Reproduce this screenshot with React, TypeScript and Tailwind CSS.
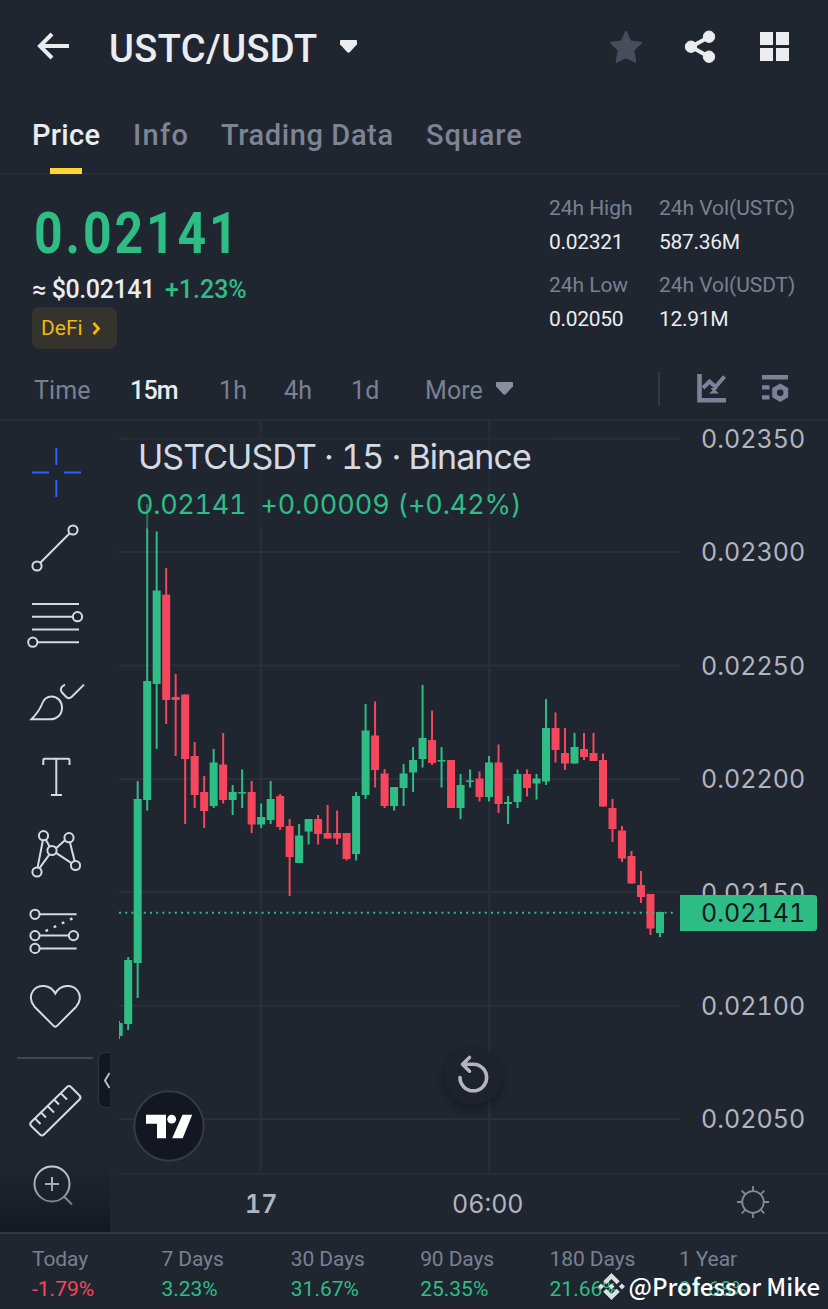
import React from "react";
import { SiBinance } from "react-icons/si";

const tabs = [
  { label: "Price", style: "w-[101px] tracking-[0.3px] text-[#eaecef]" },
  { label: "Info", style: "w-[88px] tracking-[1.3px] text-[#7d8494]" },
  { label: "Trading Data", style: "w-[205px] tracking-[0.6px] text-[#7d8494]" },
  { label: "Square", style: "w-[100px] tracking-[0.9px] text-[#7d8494]" },
];

const stats = [
  { label: "24h High", value: "0.02321" },
  { label: "24h Vol(USTC)", value: "587.36M" },
  { label: "24h Low", value: "0.02050" },
  { label: "24h Vol(USDT)", value: "12.91M" },
];

const periods = [
  { label: "Today", value: "-1.79%" },
  { label: "7 Days", value: "3.23%" },
  { label: "30 Days", value: "31.67%" },
  { label: "90 Days", value: "25.35%" },
  { label: "180 Days", value: "21.66%" },
  { label: "1 Year", value: "91.68%" },
];

const prices = ["0.02350", "0.02300", "0.02250", "0.02200", "0.02150", "0.02100", "0.02050"];

// [up, wick top, body top, body bottom, wick bottom]
const candles = [
  [1, 1021, 1023, 1036, 1039],
  [1, 957, 960, 1024, 1030],
  [1, 781, 799, 963, 998],
  [1, 504, 681, 800, 810.5],
  [1, 531.5, 590.5, 684, 749],
  [0, 568, 594.7, 700, 724],
  [0, 674, 697, 700, 756],
  [0, 694.5, 694.5, 759, 824],
  [0, 742, 756, 795, 808],
  [0, 776, 792, 811, 828],
  [1, 749, 762.5, 806, 808],
  [0, 733, 764.5, 800, 803.5],
  [1, 785, 792, 800, 815],
  [1, 769.5, 792, 793.5, 808],
  [0, 781, 792, 824.5, 833],
  [1, 803.5, 817, 824.5, 828],
  [1, 781, 799, 820, 824],
  [0, 794, 796, 827, 830],
  [0, 819, 826, 857, 896],
  [1, 824, 835.5, 863, 863],
  [1, 819, 819, 831.5, 844.5],
  [0, 815, 819, 834, 844.5],
  [0, 805, 833, 838.5, 838.5],
  [0, 810.5, 833, 838.5, 844.5],
  [0, 833, 833, 859, 860.5],
  [1, 792, 796, 854, 860.5],
  [1, 704, 730.5, 795, 799],
  [0, 701.5, 735.5, 770, 787.5],
  [0, 769, 773.5, 806, 808],
  [1, 787, 787, 806, 810.5],
  [1, 764, 773.5, 788, 806],
  [1, 747, 760, 772.5, 792],
  [1, 685, 738, 759, 767.5],
  [0, 710.5, 740, 763, 765],
  [1, 747, 760, 761.5, 787.5],
  [0, 760, 760, 808, 808],
  [1, 774, 785, 808, 819],
  [1, 769.5, 780.5, 782, 787.5],
  [0, 771.5, 778.5, 797, 801.5],
  [1, 756, 762.5, 797, 801.5],
  [0, 744.5, 762.5, 804, 813],
  [1, 796, 802, 804, 824],
  [1, 769.5, 774, 802, 808],
  [0, 769.5, 774, 788, 796.5],
  [1, 774, 778.5, 783.5, 799.5],
  [1, 699, 728, 781.5, 785],
  [0, 712.5, 728, 750, 762.5],
  [0, 728, 753, 763.5, 770],
  [1, 733, 747, 763.5, 763.5],
  [0, 733, 749, 757, 760],
  [0, 733, 753, 761, 761],
  [0, 753.5, 760, 806.5, 806.5],
  [0, 799, 808, 829, 842],
  [0, 826, 830.5, 858.5, 862],
  [0, 851, 856, 883.5, 883.5],
  [0, 871, 885, 897, 903],
  [0, 894, 894, 928.5, 935],
  [1, 912, 912, 933, 937],
];

function Caret({ className }: { className: string }) {
  return (
    <svg width="17" height="13" viewBox="0 0 17 13" fill="currentColor" className={className}>
      <path d="M1 0h15q1 0 1 1v3.3l-7 7.7q-1.5 1.4-3 0L0 4.3V1q0-1 1-1z" />
    </svg>
  );
}

function Tool({ children }: { children: React.ReactNode }) {
  return (
    <div className="flex h-[76.4px] shrink-0 items-center pl-[26px]">
      <svg width="60" height="60" viewBox="0 0 60 60" fill="none" stroke="currentColor" strokeWidth="2">
        {children}
      </svg>
    </div>
  );
}

function Toolbar() {
  return (
    <div className="relative flex h-[811px] w-[110px] shrink-0 flex-col overflow-hidden pt-[12.5px] text-[#d5d9e3]">
      <Tool>
        <path stroke="#2962ff" strokeWidth="2" d="M30.3 6v17M30.3 38v17M6 30.5h17M38 30.5h17" />
      </Tool>
      <Tool>
        <circle cx="11" cy="48" r="4.6" />
        <circle cx="47" cy="12" r="4.6" />
        <path d="M14.3 44.7L43.7 15.3" />
      </Tool>
      <Tool>
        <path d="M6 10h47M6 22.700h41M6 35.500h47M11.500 48.200H53" />
        <circle cx="51.500" cy="22.700" r="4.600" />
        <circle cx="6.800" cy="48.200" r="4.600" />
      </Tool>
      <Tool>
        <path d="M5.500 48.300c6-6.300 8.200-9.500 10.300-14.800 1.700-5 5-8 9.700-8 6.200 0 10.500 5 10.500 11.200 0 6.600-4.800 11.600-12 11.600z" />
        <path d="M39 13.600c-4.400 2-5.300 5.200-2.700 8.200l3.700 4c2 2 3.800 2 5.800 0L58 13.600" />
      </Tool>
      <Tool>
        <path d="M17.300 18v-5q0-1.300 1.300-1.300h23.600q1.300 0 1.300 1.300v5M30.300 11.700V48M25 48h11" />
      </Tool>
      <Tool>
        <path d="M19.800 15.700l3.800 6.900M30 24.200l9-8M16.900 16.300L11.600 43.400M13.500 44.100l10-13.700M30 28.800l15.500 10.400M43.900 18.300l4.700 18.700" />
        <circle cx="17.500" cy="11.700" r="4.600" />
        <circle cx="43" cy="13.700" r="4.600" />
        <circle cx="26" cy="26.500" r="4.600" />
        <circle cx="49.500" cy="41.500" r="4.600" />
        <circle cx="11" cy="48" r="4.600" />
      </Tool>
      <Tool>
        <path d="M13.600 14.300h37M13.600 35.600h29.300M13.600 48.400h37" />
        <path d="M19.500 31.100L47 18.200" strokeWidth="2.400" strokeDasharray="2.800 6.200" />
        <circle cx="9" cy="14.300" r="4.600" />
        <circle cx="9" cy="35.600" r="4.600" />
        <circle cx="47.500" cy="35.600" r="4.600" />
        <circle cx="9" cy="48.400" r="4.600" />
      </Tool>
      <Tool>
        <path d="M29.300 17.500C24 8 12.500 8 7.300 14.500c-3.800 5-3 11.500 1.200 16.200L27.800 50.100q1.500 1.300 3 0L50.200 30.700c4.200-4.700 5-11.200 1.200-16.200C46.200 8 34.600 8 29.300 17.500z" />
      </Tool>
      <div className="ml-[17px] mt-[12.5px] h-[2px] w-[76px] shrink-0 bg-[#434651]" />
      <div className="mt-[13px] shrink-0">
        <Tool>
          <path strokeLinejoin="round" d="M41 7q2-2 4 0l8.500 8.500q2 2 0 4L18 54.500q-2 2-4 0L5.200 46q-2-2 0-4zM35 13.500l6 6M28.500 20l4.500 4.500M22 26.500l6 6M15.500 33l4.500 4.500M9.500 39l5 5" />
        </Tool>
      </div>
      <Tool>
        <circle cx="26" cy="27" r="17.500" />
        <path d="M26 20v14M19 27h14M38.500 40l7.500 7.500" />
      </Tool>
      <div className="absolute bottom-0 left-0 h-[72px] w-full bg-linear-to-b from-[#131722]/0 via-[#131722]/35 to-[#131722]" />
      <div className="absolute left-[98px] top-[631px] flex h-[56px] w-[14px] items-center rounded-l-lg border border-[#2d323e] bg-[#131722] pl-[4px]">
        <svg width="7" height="17" viewBox="0 0 7 17" fill="none" stroke="#b5bdca" strokeWidth="2" className="shrink-0">
          <path d="M6.500 1L2 8.500l4.500 7.500" />
        </svg>
      </div>
    </div>
  );
}

function Chart() {
  return (
    <div className="relative h-[752px] w-[569px] shrink-0">
      <svg width="569" height="752" viewBox="111 421 569 752" className="block">
        <g stroke="#2a303a" strokeWidth="2">
          {prices.map((p, i) => (
            <path key={p} d={`M119 ${438.7 + i * 113.4}H680`} />
          ))}
          <path d="M260.700 421V1171M489.300 421V1171" />
        </g>
        {candles.map(([up, high, top, bottom, low], i) => {
          const x = 118.7 + i * 9.496;
          return (
            <g key={i} fill={up ? "#2ebd85" : "#f6465d"}>
              <rect x={i ? x - 1 : 119} y={high} width={i ? 2 : 1} height={low - high} />
              <rect x={i ? x - 4 : 119} y={top} width={i ? 8 : 3.7} height={bottom - top} />
            </g>
          );
        })}
        <path d="M119 912.700H677" stroke="#2ebd85" strokeWidth="2" strokeDasharray="2 4.200" />
        <rect x="128" y="430" width="424" height="98.500" fill="#1f2630" fillOpacity="0.5" />
      </svg>
      <div className="absolute left-[27px] top-[16px] whitespace-nowrap text-[34px] leading-[40px] tracking-[-0.95px] text-[#d6d9e2] tabular-nums">
        USTCUSDT · 15 · Binance
      </div>
      <div className="absolute left-[25px] top-[67px] flex gap-[14px] whitespace-nowrap text-[27px] leading-[34px] text-[#2ebd85] tabular-nums">
        <span className="tracking-[-0.3px]">0.02141</span>
        <span className="tracking-[-0.05px]">+0.00009</span>
        <span className="ml-[-6px] tracking-[-0.15px]">(+0.42%)</span>
      </div>
      <svg width="72" height="72" viewBox="0 0 72 72" className="absolute left-[22px] top-[669px]">
        <circle cx="36" cy="36" r="34.700" fill="#131722" stroke="#363a45" strokeWidth="2" />
        <g fill="#fff">
          <path d="M13 24.700h20v23.600h-9v-14.600H13z" />
          <circle cx="38.700" cy="29.200" r="4.400" />
          <path d="M49.500 24.700h9.700L49.700 48.300H39.200z" />
        </g>
      </svg>
      <div className="absolute left-[333px] top-[626px] flex h-[58px] w-[58px] items-center justify-center rounded-full bg-[#1e222d] shadow-[0_4px_8px_rgba(10,12,20,0.45)]">
        <svg width="40" height="44" viewBox="0 0 40 44" fill="none" stroke="#b2b5be" strokeWidth="3.600" strokeLinecap="round" strokeLinejoin="round">
          <path d="M7 23.500a13.300 13.300 0 1 0 13.300-13.300H10M16.500 3.500L9.500 10.200l7 7" />
        </svg>
      </div>
    </div>
  );
}

function PriceAxis() {
  return (
    <div className="relative w-[148px] shrink-0 overflow-hidden text-[25px] tracking-[0.05px] text-[#b2b5be] tabular-nums">
      <div className="mt-[-38px] flex flex-col pl-[21px]">
        {prices.map((p) => (
          <div key={p} className="flex h-[113.4px] items-center">{p}</div>
        ))}
      </div>
      <div className="absolute left-0 top-[474px] flex h-[36px] w-[137px] items-center rounded-r-[3px] bg-[#2ebd85] pl-[21px] pt-[2px] text-[#131722]">
        0.02141
      </div>
    </div>
  );
}

function App() {
  return (
    <div className="flex h-[1309px] w-[828px] flex-col overflow-hidden bg-[#1f2630] font-['Roboto',sans-serif]">
      <header className="flex h-[94px] shrink-0 items-center pl-[37px] pr-[38px]">
        <svg width="33" height="28" viewBox="0 0 33 28" fill="none" stroke="#eaecef" strokeWidth="4" className="mt-[-2px]">
          <path d="M15 2L3 14l12 12M3 14h29" />
        </svg>
        <h1 className="ml-[39px] mt-[3px] w-[210px] whitespace-nowrap text-[38px] font-medium leading-[44px] tracking-[0.4px] text-[#eaecef]">USTC/USDT</h1>
        <Caret className="ml-[21px] mt-[-1px] text-[#eaecef]" />
        <svg width="34" height="34" viewBox="0 0 34 34" className="ml-auto" fill="#474d5c" stroke="#474d5c" strokeWidth="2" strokeLinejoin="round">
          <path d="M17 2l4.500 9.600 10.500 1.200-7.700 7.200 2 11.700L17 27.200l-9.300 4.500 2-11.700L2 12.800l10.500-1.200z" />
        </svg>
        <svg width="32" height="34" viewBox="0 0 32 34" className="ml-[41px]" fill="#eaecef" stroke="#eaecef">
          <path d="M25 7L7 16.700l18 10" fill="none" strokeWidth="4" />
          <circle cx="7" cy="16.700" r="5.700" />
          <circle cx="25" cy="6.700" r="5.700" />
          <circle cx="25" cy="26.700" r="5.700" />
        </svg>
        <div className="ml-[44px] mr-[1px] mt-[-1px] grid grid-cols-2 gap-[3px]">
          <div className="h-[13px] w-[13px] bg-[#eaecef]" />
          <div className="h-[13px] w-[13px] bg-[#eaecef]" />
          <div className="h-[13px] w-[13px] bg-[#eaecef]" />
          <div className="h-[13px] w-[13px] bg-[#eaecef]" />
        </div>
      </header>

      <nav className="flex h-[81px] shrink-0 border-b-2 border-[#272d38] pl-[32px] text-[29px] font-medium">
        {tabs.map((tab, i) => (
          <div key={tab.label} className={`flex flex-col whitespace-nowrap ${tab.style}`}>
            <span className="mt-[24px] leading-[34px]">{tab.label}</span>
            {i === 0 && <div className="ml-[18px] mt-[16px] h-[6px] w-[32px] shrink-0 bg-[#fcd535]" />}
          </div>
        ))}
      </nav>

      <section className="flex h-[183px] shrink-0 justify-between pl-[32px]">
        <div>
          <p className="ml-[2px] mt-[29px] origin-left scale-x-[0.86] text-[58px] font-bold leading-[58px] tracking-[3.4px] text-[#2ebd85]">0.02141</p>
          <div className="mt-[13px] flex gap-[10px] text-[25px] font-medium leading-[30px]">
            <span className="tracking-[-0.4px] text-[#eaecef]">≈ $0.02141</span>
            <span className="text-[#2ebd85]">+1.23%</span>
          </div>
          <div className="mt-[2px] flex h-[42px] w-[85px] items-center gap-[9px] rounded-lg bg-[#35332e] pl-[9px] pt-[1px] text-[21px] text-[#f0b90b]">
            DeFi
            <svg width="9" height="13" viewBox="0 0 9 13" fill="none" stroke="currentColor" strokeWidth="2.800">
              <path d="M1.500 1l5 5.500-5 5.500" />
            </svg>
          </div>
        </div>
        <div className="mt-[19px] grid h-[154px] w-[279px] grid-cols-[110px_1fr] whitespace-nowrap text-[21px]">
          {stats.map((s) => (
            <div key={s.label} className="h-[77px]">
              <p className="leading-[28px] tracking-[-0.05px] text-[#7a8090]">{s.label}</p>
              <p className="mt-[6px] leading-[28px] tracking-[-0.3px] text-[#eaecef]">{s.value}</p>
            </div>
          ))}
        </div>
      </section>

      <div className="flex h-[63px] shrink-0 items-center border-b-2 border-[#272d38] pl-[34px] pr-[39px] text-[25px] tracking-[0.1px] text-[#7a8090]">
        <span className="mt-[4px] w-[96px]">Time</span>
        <span className="mt-[4px] w-[89px] font-medium tracking-[-0.8px] text-[#eaecef]">15m</span>
        <span className="mt-[4px] w-[65px]">1h</span>
        <span className="mt-[4px] w-[67px]">4h</span>
        <span className="mt-[4px] w-[74px]">1d</span>
        <span className="mt-[4px] w-[71px]">More</span>
        <Caret className="text-[#8a8fa0]" />
        <div className="ml-auto h-[34px] w-[2px] bg-[#333944]" />
        <svg width="29" height="29" viewBox="0 0 29 29" className="ml-[37px]" fill="none" stroke="#7c8297" strokeWidth="4.600">
          <path d="M2.500 0v26.200H29" />
          <path d="M6 14l6.500-6.500 6 5.500L27.500 2.500" strokeWidth="4" />
          <path d="M13.500 14h7l-2 2.500 3.500 3h-10l3.500-3z" fill="#7c8297" stroke="none" />
        </svg>
        <svg width="27" height="28" viewBox="0 0 27 28" className="ml-[36px] mt-[1px]" fill="#7c8297" fillRule="evenodd">
          <path d="M0 0h26v4.600H0zM0 10.300h7.500v4.300H0zM0 20.300h7.500v4.300H0z" />
          <path d="M18.200 8.500l8 4.600v9.200l-8 4.600-8-4.600v-9.200zM18.200 14.400a3.300 3.300 0 1 0 0 6.600 3.300 3.300 0 0 0 0-6.600z" />
        </svg>
      </div>

      <main className="flex h-[811px] shrink-0 font-['Inter',sans-serif]">
        <Toolbar />
        <div className="ml-[1px] flex w-[717px] flex-col">
          <div className="flex h-[752px]">
            <Chart />
            <PriceAxis />
          </div>
          <div className="ml-[8px] flex h-[59px] items-center border-t-2 border-[#272d38] text-[25px] text-[#b2b5be] tabular-nums">
            <span className="ml-[126px] mt-[2px] w-[207px] font-semibold">17</span>
            <span className="mt-[2px] w-[285px]">06:00</span>
            <svg width="32" height="32" viewBox="0 0 32 32" fill="none" stroke="#868993" strokeWidth="1.800" className="mt-[-4px]">
              <circle cx="16" cy="16" r="10.800" />
              <path d="M16 0v5M16 27v5M0 16h5M27 16h5M4.700 4.700l3.500 3.500M23.800 23.800l3.500 3.500M4.700 27.300l3.500-3.500M23.800 8.200l3.500-3.500" />
            </svg>
          </div>
        </div>
      </main>

      <footer className="relative flex h-[77px] shrink-0 border-t-2 border-[#333944] pl-[32px] pt-[11px] text-[21px]">
        {periods.map((p) => (
          <div key={p.label} className="w-[129.4px] shrink-0">
            <p className="leading-[28px] tracking-[-0.1px] text-[#7a8090]">{p.label}</p>
            <p className={`mt-[2px] leading-[28px] ${p.value.startsWith("-") ? "text-[#f6465d]" : "text-[#2ebd85]"}`}>{p.value}</p>
          </div>
        ))}
        <div className="absolute right-[8px] top-[36px] flex items-center gap-[4px] whitespace-nowrap">
          <SiBinance size={27} className="text-[#dcdfe1]" />
          <span className="font-['Noto_Sans_CJK_SC',sans-serif] text-[24px] font-medium leading-[32px] text-white">@Professor Mike</span>
        </div>
      </footer>
    </div>
  );
}

export default App;
